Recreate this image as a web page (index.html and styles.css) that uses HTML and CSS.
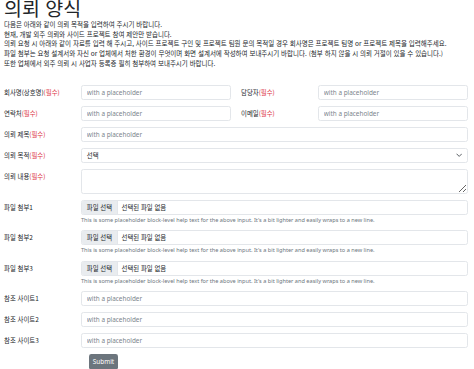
FILE: index.html
```html
<!DOCTYPE html>
<html lang="ko">
<head>
<meta charset="utf-8">
<title>의뢰 양식</title>
<link rel="stylesheet" href="styles.css">
</head>
<body>
<div class="container">
  <h1 class="title">의뢰 양식</h1>
  <p class="intro">다음은 아래와 같이 의뢰 목적을 입력하여 주시기 바랍니다.<br>현재, 개발 외주 의뢰와 사이드 프로젝트 참여 제안만 받습니다.<br>의뢰 요청 시 아래와 같이 자료를 입력 해 주시고, 사이드 프로젝트 구인 및 프로젝트 팀원 문의 목적일 경우 회사명은 프로젝트 팀명 or 프로젝트 제목을 입력해주세요.<br>파일 첨부는 요청 설계서와 자신 or 업체에서 처한 환경이 무엇이며 화면 설계서에 작성하여 보내주시기 바랍니다. (첨부 하지 않을 시 의뢰 거절이 있을 수 있습니다.)<br>또한 업체에서 외주 의뢰 시 사업자 등록증 필히 첨부하여 보내주시기 바랍니다.</p>

  <form class="form">
    <div class="pair">
      <div class="row half">
        <label class="lbl">회사명(상호명)<span class="req">(필수)</span></label>
        <div class="field"><input class="ctl" type="text" placeholder="with a placeholder"></div>
      </div>
      <div class="row half">
        <label class="lbl">담당자<span class="req">(필수)</span></label>
        <div class="field"><input class="ctl" type="text" placeholder="with a placeholder"></div>
      </div>
    </div>
    <div class="pair">
      <div class="row half">
        <label class="lbl">연락처<span class="req">(필수)</span></label>
        <div class="field"><input class="ctl" type="text" placeholder="with a placeholder"></div>
      </div>
      <div class="row half">
        <label class="lbl">이메일<span class="req">(필수)</span></label>
        <div class="field"><input class="ctl" type="text" placeholder="with a placeholder"></div>
      </div>
    </div>
    <div class="row">
      <label class="lbl">의뢰 제목<span class="req">(필수)</span></label>
      <div class="field"><input class="ctl" type="text" placeholder="with a placeholder"></div>
    </div>
    <div class="row">
      <label class="lbl">의뢰 목적<span class="req">(필수)</span></label>
      <div class="field">
        <div class="ctl select"><span>선택</span>
          <svg class="chev" viewBox="0 0 16 16" width="6.4" height="6.4"><path d="M2 5l6 6 6-6" fill="none" stroke="#343a40" stroke-width="2" stroke-linecap="round" stroke-linejoin="round"/></svg>
        </div>
      </div>
    </div>
    <div class="row">
      <label class="lbl">의뢰 내용<span class="req">(필수)</span></label>
      <div class="field"><textarea class="ctl area"></textarea></div>
    </div>
    <div class="row">
      <label class="lbl">파일 첨부1</label>
      <div class="field">
        <div class="ctl file"><span class="fbtn">파일 선택</span><span class="fname">선택된 파일 없음</span></div>
        <div class="help">This is some placeholder block-level help text for the above input. It's a bit lighter and easily wraps to a new line.</div>
      </div>
    </div>
    <div class="row">
      <label class="lbl">파일 첨부2</label>
      <div class="field">
        <div class="ctl file"><span class="fbtn">파일 선택</span><span class="fname">선택된 파일 없음</span></div>
        <div class="help">This is some placeholder block-level help text for the above input. It's a bit lighter and easily wraps to a new line.</div>
      </div>
    </div>
    <div class="row">
      <label class="lbl">파일 첨부3</label>
      <div class="field">
        <div class="ctl file"><span class="fbtn">파일 선택</span><span class="fname">선택된 파일 없음</span></div>
        <div class="help">This is some placeholder block-level help text for the above input. It's a bit lighter and easily wraps to a new line.</div>
      </div>
    </div>
    <div class="row">
      <label class="lbl">참조 사이트1</label>
      <div class="field"><input class="ctl" type="text" placeholder="with a placeholder"></div>
    </div>
    <div class="row">
      <label class="lbl">참조 사이트2</label>
      <div class="field"><input class="ctl" type="text" placeholder="with a placeholder"></div>
    </div>
    <div class="row">
      <label class="lbl">참조 사이트3</label>
      <div class="field"><input class="ctl" type="text" placeholder="with a placeholder"></div>
    </div>
    <div class="actions">
      <button class="btn" type="button">Submit</button>
    </div>
  </form>
</div>
</body>
</html>
```
FILE: styles.css
```css
html, body {
  margin: 0;
  padding: 0;
  background: #ffffff;
}
body {
  font-family: "Noto Sans", "Noto Sans CJK KR", sans-serif;
  font-size: 6.4px;
  line-height: 1.5;
  color: #212529;
}
.container {
  padding: 0 6px 0 4px;
}
.title {
  font-family: "Noto Sans CJK KR", "Noto Sans", sans-serif;
  font-size: 19.5px;
  font-weight: 400;
  line-height: 15px;
  margin: 0 0 5.2px;
}
.intro {
  margin: 0 0 17px;
  line-height: 9.6px;
  font-size: 6.5px;
  font-family: "Noto Sans CJK KR", "Noto Sans", sans-serif;
}
.form {
  margin: 0;
}
.pair {
  display: flex;
  gap: 10px;
}
.row {
  display: flex;
  align-items: flex-start;
  margin-bottom: 6px;
}
.half {
  flex: 1;
  min-width: 0;
}
.lbl {
  width: 77px;
  flex: none;
  line-height: 15px;
  font-family: "Noto Sans CJK KR", "Noto Sans", sans-serif;
}
.req {
  color: #dc3545;
}
.field {
  flex: 1;
  min-width: 0;
}
.ctl {
  display: block;
  box-sizing: border-box;
  width: 100%;
  height: 15px;
  margin: 0;
  padding: 0 4.8px;
  border: 1px solid #e3e6ea;
  border-radius: 2.4px;
  background: #fff;
  font-family: "Noto Sans", "Noto Sans CJK KR", sans-serif;
  font-size: 6.4px;
  line-height: 13px;
  color: #212529;
  outline: none;
}
.ctl::placeholder {
  color: #7d858c;
}
.select {
  display: flex;
  align-items: center;
  justify-content: space-between;
}
.chev {
  display: block;
}
.area {
  height: 24.5px;
  resize: vertical;
  padding: 2.4px 4.8px;
}
.file {
  display: flex;
  align-items: stretch;
  padding: 0;
  overflow: hidden;
}
.fbtn {
  background: #e9ecef;
  padding: 0 4.8px;
  border-right: 1px solid #e3e6ea;
  font-family: "Noto Sans CJK KR", sans-serif;
}
.fname {
  padding: 0 3.6px;
  font-family: "Noto Sans CJK KR", sans-serif;
}
.help {
  margin-top: 1.2px;
  font-size: 5.6px;
  line-height: 8.4px;
  color: #6c757d;
}
.actions {
  padding-left: 85px;
}
.btn {
  display: block;
  box-sizing: border-box;
  height: 15.5px;
  width: 29px;
  padding: 0;
  border: 0;
  border-radius: 2.4px;
  background: #6c757d;
  color: #fff;
  font-family: "Noto Sans", sans-serif;
  font-size: 6.4px;
  line-height: 15.5px;
  text-align: center;
}
```
